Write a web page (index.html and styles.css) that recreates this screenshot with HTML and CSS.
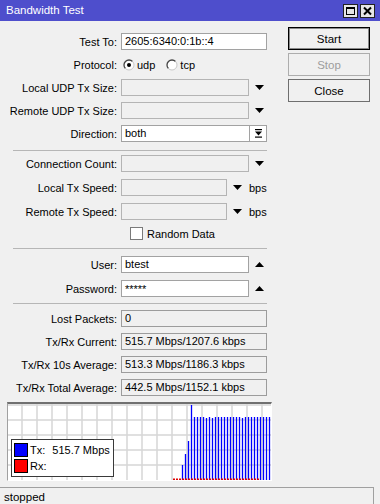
FILE: index.html
```html
<!DOCTYPE html>
<html>
<head>
<meta charset="utf-8">
<link rel="stylesheet" href="styles.css">
</head>
<body>
<div class="win">
  <div class="titlebar">
    <span class="title">Bandwidth Test</span>
    <div class="tbtns">
      <span class="tbtn"><svg width="13" height="12" viewBox="0 0 13 12"><rect x="2.5" y="2.5" width="8" height="7" fill="none" stroke="#000"/><rect x="2" y="2" width="9" height="2" fill="#000"/></svg></span>
      <span class="tbtn"><svg width="13" height="12" viewBox="0 0 13 12"><path d="M3 2.5L10 9.5M10 2.5L3 9.5" stroke="#000" stroke-width="2"/></svg></span>
    </div>
  </div>
  <div class="main">
    <div class="form">
      <div class="sec s1">
        <div class="row"><span class="lbl">Test To:</span><div class="inp edit wfull">2605:6340:0:1b::4</div></div>
        <div class="row"><span class="lbl">Protocol:</span>
          <span class="radio"><svg width="12" height="12" viewBox="0 0 12 12"><circle cx="6" cy="6" r="5" fill="#fff"/><path d="M2.46 9.54A5 5 0 0 1 9.54 2.46" fill="none" stroke="#444" stroke-width="1.3"/><path d="M9.54 2.46A5 5 0 0 1 2.46 9.54" fill="none" stroke="#c8c8c8" stroke-width="1"/><circle cx="6" cy="6" r="2" fill="#000"/></svg></span><span class="rtext">udp</span>
          <span class="radio r2"><svg width="12" height="12" viewBox="0 0 12 12"><circle cx="6" cy="6" r="5" fill="#fff"/><path d="M2.46 9.54A5 5 0 0 1 9.54 2.46" fill="none" stroke="#444" stroke-width="1.3"/><path d="M9.54 2.46A5 5 0 0 1 2.46 9.54" fill="none" stroke="#c8c8c8" stroke-width="1"/></svg></span><span class="rtext">tcp</span>
        </div>
        <div class="row"><span class="lbl">Local UDP Tx Size:</span><div class="inp dis wmid"></div><span class="arr"><svg width="9" height="5" viewBox="0 0 9 5"><path d="M0 0H9L4.5 5Z"/></svg></span></div>
        <div class="row"><span class="lbl">Remote UDP Tx Size:</span><div class="inp dis wmid"></div><span class="arr"><svg width="9" height="5" viewBox="0 0 9 5"><path d="M0 0H9L4.5 5Z"/></svg></span></div>
        <div class="row"><span class="lbl">Direction:</span><div class="inp edit wdir">both</div><span class="dbtn"><svg width="15" height="15" viewBox="0 0 15 15"><rect x="4" y="3" width="7" height="1.2" fill="#000"/><path d="M4 5.5H11L7.5 9.5Z" fill="#000"/><rect x="4" y="10.5" width="7" height="1.2" fill="#000"/></svg></span></div>
      </div>
      <div class="sep sep1"></div>
      <div class="sec s2">
        <div class="row"><span class="lbl">Connection Count:</span><div class="inp dis wmid"></div><span class="arr"><svg width="9" height="5" viewBox="0 0 9 5"><path d="M0 0H9L4.5 5Z"/></svg></span></div>
        <div class="row spd"><span class="lbl">Local Tx Speed:</span><div class="inp dis"></div><span class="arr"><svg width="9" height="5" viewBox="0 0 9 5"><path d="M0 0H9L4.5 5Z"/></svg></span><span class="unit">bps</span></div>
        <div class="row spd"><span class="lbl">Remote Tx Speed:</span><div class="inp dis"></div><span class="arr"><svg width="9" height="5" viewBox="0 0 9 5"><path d="M0 0H9L4.5 5Z"/></svg></span><span class="unit">bps</span></div>
        <div class="row chkrow"><span class="chk"></span><span class="chktext">Random Data</span></div>
      </div>
      <div class="sep sep2"></div>
      <div class="sec s3">
        <div class="row"><span class="lbl">User:</span><div class="inp edit wmid">btest</div><span class="arr"><svg width="9" height="5" viewBox="0 0 9 5"><path d="M0 5H9L4.5 0Z"/></svg></span></div>
        <div class="row"><span class="lbl">Password:</span><div class="inp edit wmid pw">*****</div><span class="arr"><svg width="9" height="5" viewBox="0 0 9 5"><path d="M0 5H9L4.5 0Z"/></svg></span></div>
      </div>
      <div class="sep sep3"></div>
      <div class="sec s4">
        <div class="row"><span class="lbl">Lost Packets:</span><div class="inp ro wfull">0</div></div>
        <div class="row"><span class="lbl">Tx/Rx Current:</span><div class="inp ro wfull">515.7 Mbps/1207.6 kbps</div></div>
        <div class="row"><span class="lbl">Tx/Rx 10s Average:</span><div class="inp ro wfull">513.3 Mbps/1186.3 kbps</div></div>
        <div class="row"><span class="lbl">Tx/Rx Total Average:</span><div class="inp ro wfull">442.5 Mbps/1152.1 kbps</div></div>
      </div>
      <div class="graph">
        <svg class="plot" width="263" height="76" viewBox="0 0 263 76">
          <g stroke="#d6d6d6" stroke-width="1.5">
            <path d="M14 0V76M29 0V76M44 0V76M59 0V76M74 0V76M89 0V76M104 0V76M119 0V76M134 0V76M149 0V76M164 0V76M179 0V76M194 0V76M209 0V76M224 0V76M239 0V76M254 0V76"/>
            <path d="M0 1H263M0 16H263M0 31H263M0 46H263M0 61H263"/>
          </g>
          <path stroke="#0000ff" stroke-width="1.3" fill="none" d="M174.5 61V76M177.5 50V76M180.5 37V76M183.5 1V76M186.5 13V76M189.5 13V76M192.5 13V76M195.5 13V76M198.5 14V76M201.5 13V76M204.5 14V76M207.5 13V76M210.5 13V76M213.5 13V76M216.5 13V76M219.5 13V76M222.5 13V76M225.5 13V76M228.5 13V76M231.5 13V76M234.5 14V76M237.5 13V76M240.5 13V76M243.5 13V76M246.5 13V76M249.5 13V76M252.5 13V76M255.5 13V76M258.5 13V76M261.5 13V76"/>
          <path stroke="#e00000" stroke-width="1.6" fill="none" d="M165 75.2h2M168 75.2h2M171 75.2h2M174 75.2h2M177 75.2h2M180 75.2h2M183 75.2h2M186 75.2h2M189 75.2h2M192 75.2h2M195 75.2h2M198 75.2h2M201 75.2h2M204 75.2h2M207 75.2h2M210 75.2h2M213 75.2h2M216 75.2h2M219 75.2h2M222 75.2h2M225 75.2h2M228 75.2h2M231 75.2h2M234 75.2h2M237 75.2h2M240 75.2h2M243 75.2h2M246 75.2h2M249 75.2h2"/>
        </svg>
        <div class="legend">
          <div class="lrow"><span class="sw blue"></span><span class="ltx">Tx:</span><span class="lval">515.7 Mbps</span></div>
          <div class="lrow"><span class="sw red"></span><span class="ltx">Rx:</span></div>
        </div>
      </div>
    </div>
    <div class="side">
      <div class="btn start">Start</div>
      <div class="btn stop">Stop</div>
      <div class="btn close">Close</div>
    </div>
  </div>
  <div class="status">stopped</div>
</div>
</body>
</html>
```

FILE: styles.css
```css
html, body {
  margin: 0;
  padding: 0;
  background: #f0f0f0;
}
body {
  font-family: "Liberation Sans", Arial, sans-serif;
  font-size: 11px;
  color: #000;
}
.win {
  width: 380px;
  height: 504px;
  background: #f0f0f0;
  overflow: hidden;
}
.titlebar {
  height: 21px;
  background: #4e4ecc;
  display: flex;
  align-items: center;
  justify-content: space-between;
}
.title {
  color: #fff;
  font-size: 11.5px;
  padding-left: 6px;
  padding-bottom: 1px;
}
.tbtns {
  display: flex;
  gap: 2px;
  padding-right: 5px;
}
.tbtn {
  width: 15px;
  height: 14px;
  box-sizing: border-box;
  border: 1px solid #222;
  background: #e6e6e6;
  display: flex;
  align-items: center;
  justify-content: center;
}
.tbtn svg { display: block; }
.main {
  display: flex;
}
.form {
  width: 280px;
  flex: none;
  padding-top: 12px;
  display: flex;
  flex-direction: column;
}
.sec {
  display: flex;
  flex-direction: column;
  gap: 6px;
}
.s2, .s3 { gap: 7px; }
.row {
  display: flex;
  align-items: center;
  height: 17px;
}
.lbl {
  flex: none;
  width: 117px;
  margin-right: 4px;
  text-align: right;
  white-space: nowrap;
}
.inp {
  flex: none;
  height: 17px;
  box-sizing: border-box;
  padding-left: 3px;
  line-height: 15px;
  white-space: nowrap;
  overflow: hidden;
}
.edit {
  background: #fff;
  border: 1px solid #a2a2a2;
}
.dis {
  background: #f0f0f0;
  border: 1px solid #b4b4b4;
}
.ro {
  background: #f0f0f0;
  border: 1px solid #9c9c9c;
}
.inp.wfull { width: 146px; }
.inp.wmid { width: 128px; }
.inp.wdir { width: 129px; }
.spd .inp { width: 106px; }
.pw { line-height: 17px; }
.arr {
  flex: none;
  margin-left: 6px;
  display: flex;
}
.arr svg { display: block; fill: #000; }
.unit { margin-left: 7px; }
.dbtn {
  flex: none;
  width: 17px;
  height: 17px;
  box-sizing: border-box;
  border: 1px solid #a2a2a2;
  border-left: none;
  background: #fff;
  display: flex;
  align-items: center;
  justify-content: center;
}
.dbtn svg { display: block; }
.radio {
  display: flex;
  margin-left: 2px;
}
.radio svg { display: block; }
.r2 { margin-left: 11px; }
.rtext { margin-left: 2px; }
.chkrow {
  height: 13px;
  padding-left: 130px;
}
.chk {
  flex: none;
  width: 13px;
  height: 13px;
  box-sizing: border-box;
  background: #fff;
  border: 1px solid #7a7a7a;
}
.chktext { margin-left: 4px; }
.sep {
  height: 1px;
  background: #b6b6b6;
  margin-left: 13px;
  width: 254px;
}
.sep1 { margin-top: 8px; margin-bottom: 4px; }
.sep2 { margin-top: 8px; margin-bottom: 7px; }
.sep3 { margin-top: 6px; margin-bottom: 6px; }
.graph {
  position: relative;
  margin-top: 6px;
  margin-left: 7px;
  width: 265px;
  height: 79px;
  box-sizing: border-box;
  border-top: 2px solid #707070;
  border-left: 1px solid #a0a0a0;
  border-right: 1px solid #fff;
  border-bottom: 1px solid #fff;
  background: #fff;
}
.plot { display: block; }
.legend {
  position: absolute;
  left: 3px;
  top: 35px;
  width: 103px;
  height: 38px;
  box-sizing: border-box;
  border: 1px solid #3a3a3a;
  background: #fff;
  padding: 3px 0 0 2px;
  display: flex;
  flex-direction: column;
  gap: 2px;
}
.lrow {
  display: flex;
  align-items: center;
  height: 14px;
  font-size: 11px;
  white-space: nowrap;
}
.sw {
  flex: none;
  width: 14px;
  height: 14px;
  box-sizing: border-box;
  border: 1px solid #000;
}
.blue { background: #0000ff; }
.red { background: #ff0000; }
.ltx { margin-left: 2px; }
.lval { margin-left: 7px; }
.side {
  margin-left: 8px;
  padding-top: 6px;
  display: flex;
  flex-direction: column;
  gap: 3px;
}
.btn {
  width: 82px;
  height: 23px;
  box-sizing: border-box;
  background: #f0f0f0;
  display: flex;
  align-items: center;
  justify-content: center;
  font-size: 11.5px;
}
.start {
  border: 1px solid #000;
  box-shadow: inset 0 0 0 1px #8a8a8a;
}
.stop {
  border: 1px solid #adadad;
  color: #9d9d9d;
}
.close {
  border: 1px solid #6f6f6f;
}
.status {
  margin-top: 6px;
  width: 374px;
  height: 17px;
  box-sizing: border-box;
  border-top: 1px solid #a0a0a0;
  border-right: 1px solid #a0a0a0;
  padding-left: 4px;
  line-height: 18px;
  font-size: 11.5px;
}
```
